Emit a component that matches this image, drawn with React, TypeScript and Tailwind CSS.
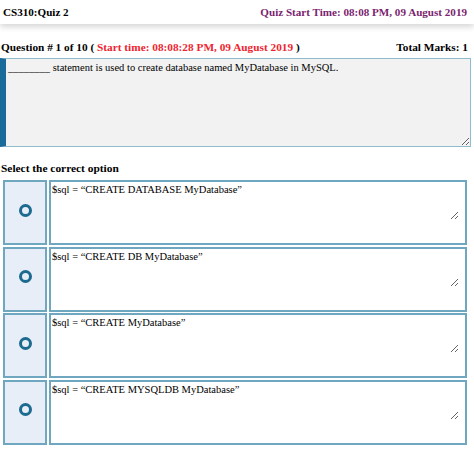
import React from 'react';

const options = [
  '$sql = “CREATE DATABASE MyDatabase”',
  '$sql = “CREATE DB MyDatabase”',
  '$sql = “CREATE MyDatabase”',
  '$sql = “CREATE MYSQLDB MyDatabase”',
];

export default function App() {
  return (
    <div className="min-h-screen bg-white text-black font-['Liberation_Serif','Times_New_Roman',serif]">
      {/* Top bar */}
      <div className="h-[24px] flex items-center justify-between pl-[3px] pr-[7px] bg-white shadow-[0_3px_6px_rgba(0,0,0,0.16)]">
        <span className="text-[11.1px] font-bold">CS310:Quiz 2</span>
        <span className="text-[11.1px] font-bold text-[#7b1f70]">Quiz Start Time: 08:08 PM, 09 August 2019</span>
      </div>

      {/* Question header */}
      <div className="mt-[15px] h-[17px] flex items-center justify-between pl-[1px] pr-[6px] text-[11.3px] font-bold">
        <span>
          Question # 1 of 10 ( <span className="text-[#ee2430]">Start time: 08:08:28 PM, 09 August 2019</span> )
        </span>
        <span>Total Marks: 1</span>
      </div>

      {/* Question text */}
      <div className="mt-[2px] w-[471px]">
        <textarea
          readOnly
          defaultValue="________ statement is used to create database named MyDatabase in MySQL."
          className="block w-full h-[89px] bg-[#f2f2f2] border border-[#8dbccb] border-l-[6px] border-l-[#1a6b9a] pl-[2px] pt-[2px] text-[10.5px] leading-[13px] outline-none"
        />
      </div>

      {/* Options */}
      <div className="mt-[14px] pl-[1px] text-[11.4px] font-bold h-[16px] flex items-center">Select the correct option</div>
      <div className="mt-[3px] flex flex-col gap-[1.5px] pl-[3px] w-[467px]">
        {options.map((opt) => (
          <div key={opt} className="flex gap-[2px] h-[65px]">
            <div className="w-[44px] shrink-0 bg-[#e7eef8] border-2 border-[#6ea7bf] flex items-center justify-center pb-[5px]">
              <div className="w-[13px] h-[13px] rounded-full border-[3px] border-[#1c6a8e]" />
            </div>
            <div className="flex-1 bg-white border-2 border-[#6ea7bf]">
              <textarea
                readOnly
                defaultValue={opt}
                className="block w-[calc(100%-6px)] h-[38px] bg-white pl-[1px] pt-[1px] text-[10.5px] leading-[13px] outline-none"
              />
            </div>
          </div>
        ))}
      </div>
    </div>
  );
}
